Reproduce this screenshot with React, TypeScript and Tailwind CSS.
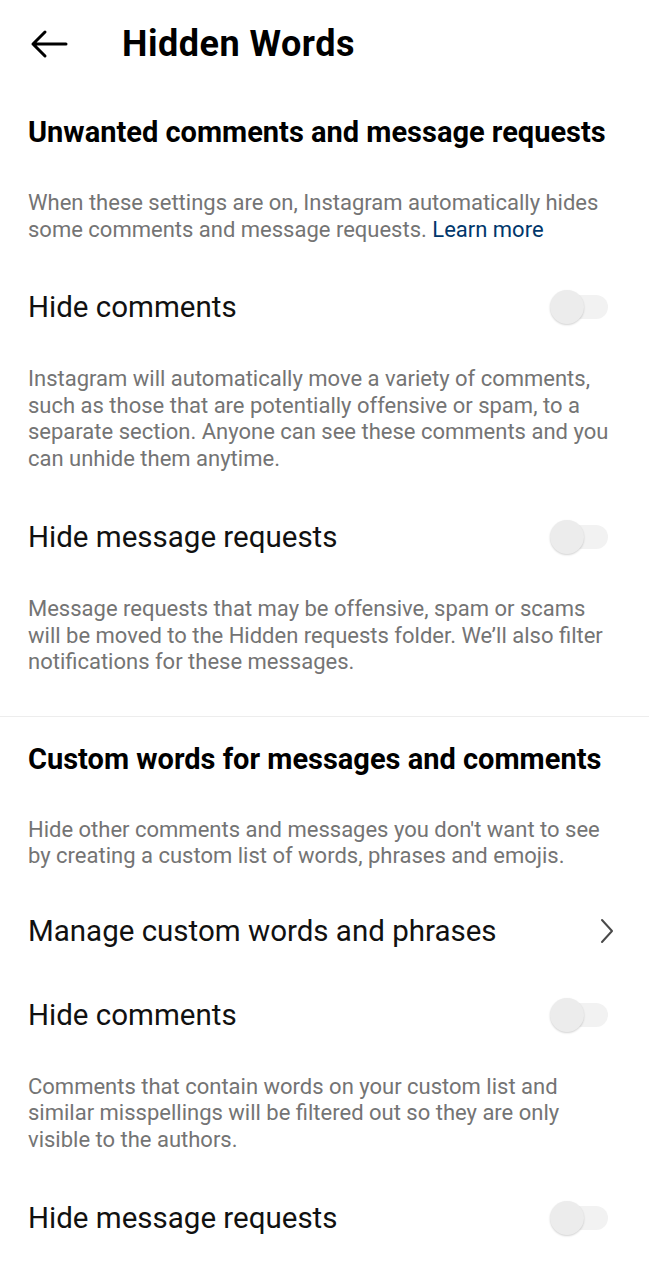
import { ReactNode } from 'react';

function Toggle() {
  return (
    <div className="relative h-[36px] w-[58px] shrink-0">
      <div className="absolute left-[8px] top-[6px] h-[24px] w-[50px] rounded-full bg-[#f2f2f2]" />
      <div className="absolute left-0 top-[1px] h-[34px] w-[34px] rounded-full bg-[#ececec] shadow-[0_1px_2px_rgba(0,0,0,0.18)]" />
    </div>
  );
}

function Chevron() {
  return (
    <svg width="14" height="26" viewBox="0 0 14 26" fill="none" className="shrink-0">
      <path d="M2 2 L12 13 L2 24" stroke="#4a4a4a" strokeWidth="2" strokeLinecap="round" strokeLinejoin="round" />
    </svg>
  );
}

function Row({ label, right, className }: { label: string; right: ReactNode; className: string }) {
  return (
    <div className={`flex h-[32px] items-center justify-between ${className}`}>
      <span className="text-[29.5px] leading-[32px] text-[#111]">{label}</span>
      {right}
    </div>
  );
}

function Desc({ children, className }: { children: ReactNode; className: string }) {
  return <p className={`pr-[31px] text-[22px] leading-[26.5px] text-[#747474] ${className}`}>{children}</p>;
}

export default function App() {
  return (
    <main className="min-h-screen bg-white font-['Roboto',sans-serif]">
      <header className="flex h-[88px] items-center px-[30px]">
        <svg width="38" height="30" viewBox="0 0 38 30" fill="none">
          <path d="M36 15 H3 M15 3 L3 15 L15 27" stroke="#000" strokeWidth="3" strokeLinecap="round" strokeLinejoin="round" />
        </svg>
        <h1 className="ml-[54px] text-[36px] font-bold leading-[40px] tracking-[0.5px] text-black">Hidden Words</h1>
      </header>

      <section className="pl-[28px]">
        <h2 className="mt-[28px] text-[29px] font-bold leading-[32px] text-black">Unwanted comments and message requests</h2>
        <Desc className="mt-[42px]">
          When these settings are on, Instagram automatically hides some comments and message requests.{' '}
          <span className="text-[#00376b]">Learn more</span>
        </Desc>

        <Row className="mt-[48px] pr-[41px]" label="Hide comments" right={<Toggle />} />
        <Desc className="mt-[43px]">
          Instagram will automatically move a variety of comments, such as those that are potentially offensive or spam, to a separate section. Anyone can see these comments and you can unhide them anytime.
        </Desc>

        <Row className="mt-[49px] pr-[41px]" label="Hide message requests" right={<Toggle />} />
        <Desc className="mt-[43px]">
          Message requests that may be offensive, spam or scams will be moved to the Hidden requests folder. We’ll also filter notifications for these messages.
        </Desc>
      </section>

      <div className="mt-[40px] h-px bg-[#ededed]" />

      <section className="pl-[28px]">
        <h2 className="mt-[26px] text-[29px] font-bold leading-[32px] text-black">Custom words for messages and comments</h2>
        <Desc className="mt-[42px]">
          Hide other comments and messages you don't want to see by creating a custom list of words, phrases and emojis.
        </Desc>

        <Row className="mt-[45px] pr-[35px]" label="Manage custom words and phrases" right={<Chevron />} />

        <Row className="mt-[52px] pr-[41px]" label="Hide comments" right={<Toggle />} />
        <Desc className="mt-[43px]">
          Comments that contain words on your custom list and similar misspellings will be filtered out so they are only visible to the authors.
        </Desc>

        <Row className="mt-[49px] pr-[41px]" label="Hide message requests" right={<Toggle />} />
      </section>
    </main>
  );
}
